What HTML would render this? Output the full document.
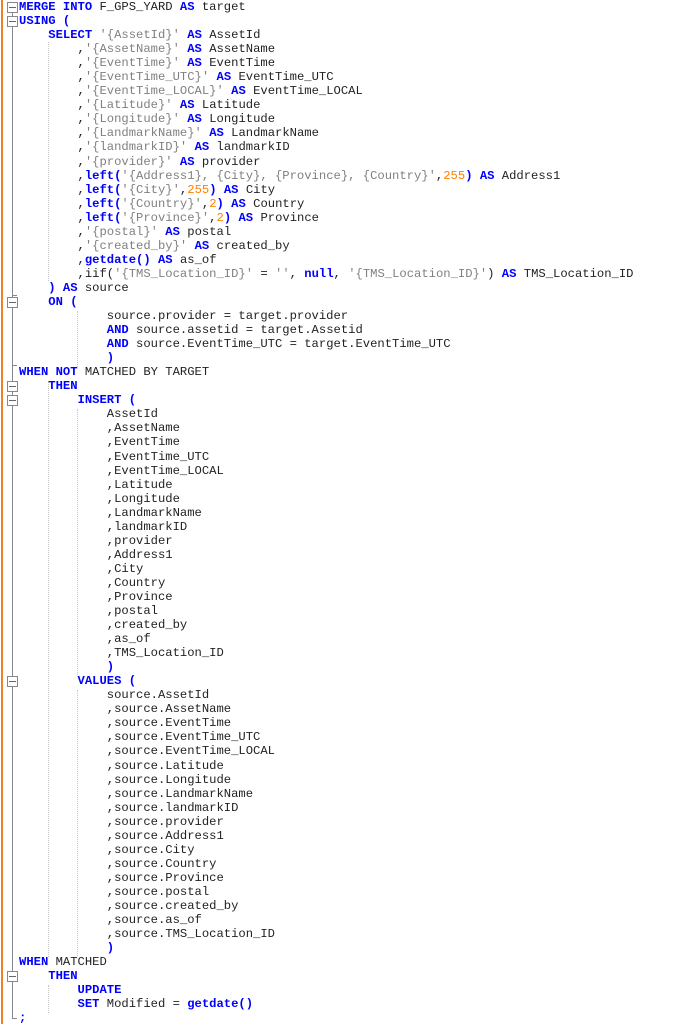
<!DOCTYPE html>
<html><head><meta charset="utf-8"><style>
body{margin:0;background:#fff;width:687px;height:1024px;overflow:hidden;position:relative}
#orange{position:absolute;left:1px;top:0;width:2px;height:1024px;background:#f08020}
#code{position:absolute;left:19px;top:0px;margin:0;font:12.2px/14.05px "Liberation Mono",monospace;color:#222;white-space:pre}
.k{color:#0000ff;font-weight:bold}.s{color:#808080}.n{color:#ff8000}
.g{position:absolute;width:0;border-left:1px dotted #c8c8c8}
.tree{position:absolute;left:12px;width:1px;background:#888}
.box{position:absolute;left:7px;width:9px;height:9px;border:1px solid #888;background:#fff}
.box:after{content:"";position:absolute;left:1px;top:4px;width:7px;height:1px;background:#666}
.tick{position:absolute;left:12px;width:5px;height:1px;background:#888}
</style></head><body>
<div id="orange"></div>
<div class="tree" style="top:12px;height:1006px"></div>
<div class="tick" style="top:1018px"></div>
<div class="tick" style="top:295px"></div>
<div class="tick" style="top:365px"></div>
<div class="box" style="top:2px"></div>
<div class="box" style="top:16px"></div>
<div class="box" style="top:297px"></div>
<div class="box" style="top:381px"></div>
<div class="box" style="top:395px"></div>
<div class="box" style="top:676px"></div>
<div class="box" style="top:971px"></div>
<div class="g" style="left:48px;top:42px;height:239px"></div>
<div class="g" style="left:77px;top:311px;height:56px"></div>
<div class="g" style="left:48px;top:381px;height:576px"></div>
<div class="g" style="left:77px;top:409px;height:266px"></div>
<div class="g" style="left:77px;top:690px;height:266px"></div>
<div class="g" style="left:48px;top:985px;height:28px"></div>
<pre id="code"><span class="k">MERGE INTO</span> F_GPS_YARD <span class="k">AS</span> target
<span class="k">USING (</span>
    <span class="k">SELECT</span> <span class="s">'{AssetId}'</span> <span class="k">AS</span> AssetId
        ,<span class="s">'{AssetName}'</span> <span class="k">AS</span> AssetName
        ,<span class="s">'{EventTime}'</span> <span class="k">AS</span> EventTime
        ,<span class="s">'{EventTime_UTC}'</span> <span class="k">AS</span> EventTime_UTC
        ,<span class="s">'{EventTime_LOCAL}'</span> <span class="k">AS</span> EventTime_LOCAL
        ,<span class="s">'{Latitude}'</span> <span class="k">AS</span> Latitude
        ,<span class="s">'{Longitude}'</span> <span class="k">AS</span> Longitude
        ,<span class="s">'{LandmarkName}'</span> <span class="k">AS</span> LandmarkName
        ,<span class="s">'{landmarkID}'</span> <span class="k">AS</span> landmarkID
        ,<span class="s">'{provider}'</span> <span class="k">AS</span> provider
        ,<span class="k">left(</span><span class="s">'{Address1}, {City}, {Province}, {Country}'</span>,<span class="n">255</span><span class="k">)</span> <span class="k">AS</span> Address1
        ,<span class="k">left(</span><span class="s">'{City}'</span>,<span class="n">255</span><span class="k">)</span> <span class="k">AS</span> City
        ,<span class="k">left(</span><span class="s">'{Country}'</span>,<span class="n">2</span><span class="k">)</span> <span class="k">AS</span> Country
        ,<span class="k">left(</span><span class="s">'{Province}'</span>,<span class="n">2</span><span class="k">)</span> <span class="k">AS</span> Province
        ,<span class="s">'{postal}'</span> <span class="k">AS</span> postal
        ,<span class="s">'{created_by}'</span> <span class="k">AS</span> created_by
        ,<span class="k">getdate()</span> <span class="k">AS</span> as_of
        ,iif(<span class="s">'{TMS_Location_ID}'</span> = <span class="s">''</span>, <span class="k">null</span>, <span class="s">'{TMS_Location_ID}'</span>) <span class="k">AS</span> TMS_Location_ID
    <span class="k">) AS</span> source
    <span class="k">ON (</span>
            source.provider = target.provider
            <span class="k">AND</span> source.assetid = target.Assetid
            <span class="k">AND</span> source.EventTime_UTC = target.EventTime_UTC
            <span class="k">)</span>
<span class="k">WHEN NOT</span> MATCHED BY TARGET
    <span class="k">THEN</span>
        <span class="k">INSERT (</span>
            AssetId
            ,AssetName
            ,EventTime
            ,EventTime_UTC
            ,EventTime_LOCAL
            ,Latitude
            ,Longitude
            ,LandmarkName
            ,landmarkID
            ,provider
            ,Address1
            ,City
            ,Country
            ,Province
            ,postal
            ,created_by
            ,as_of
            ,TMS_Location_ID
            <span class="k">)</span>
        <span class="k">VALUES (</span>
            source.AssetId
            ,source.AssetName
            ,source.EventTime
            ,source.EventTime_UTC
            ,source.EventTime_LOCAL
            ,source.Latitude
            ,source.Longitude
            ,source.LandmarkName
            ,source.landmarkID
            ,source.provider
            ,source.Address1
            ,source.City
            ,source.Country
            ,source.Province
            ,source.postal
            ,source.created_by
            ,source.as_of
            ,source.TMS_Location_ID
            <span class="k">)</span>
<span class="k">WHEN</span> MATCHED
    <span class="k">THEN</span>
        <span class="k">UPDATE</span>
        <span class="k">SET</span> Modified = <span class="k">getdate()</span>
<span class="k">;</span></pre>
</body></html>
